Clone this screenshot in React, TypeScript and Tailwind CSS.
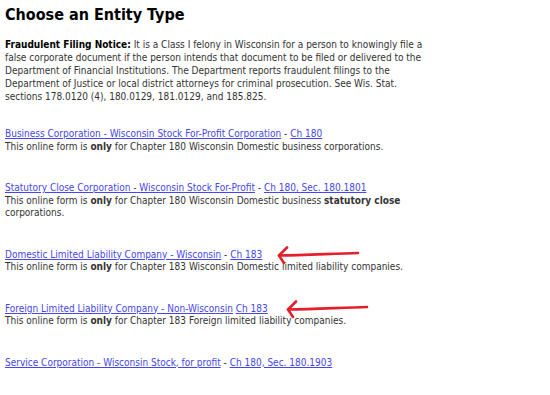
const entities = [
  {
    name: 'Business Corporation - Wisconsin Stock For-Profit Corporation',
    ch: 'Ch 180',
    dash: true,
    desc: (
      <>
        This online form is <b>only</b> for Chapter 180 Wisconsin Domestic business corporations.
      </>
    ),
  },
  {
    name: 'Statutory Close Corporation - Wisconsin Stock For-Profit',
    ch: 'Ch 180, Sec. 180.1801',
    dash: true,
    desc: (
      <>
        This online form is <b>only</b> for Chapter 180 Wisconsin Domestic business <b>statutory close</b>
        <br />
        corporations.
      </>
    ),
  },
  {
    name: 'Domestic Limited Liability Company - Wisconsin',
    ch: 'Ch 183',
    dash: true,
    arrow: 'left-[271px]',
    desc: (
      <>
        This online form is <b>only</b> for Chapter 183 Wisconsin Domestic limited liability companies.
      </>
    ),
  },
  {
    name: 'Foreign Limited Liability Company - Non-Wisconsin',
    ch: 'Ch 183',
    dash: false,
    arrow: 'left-[280px]',
    desc: (
      <>
        This online form is <b>only</b> for Chapter 183 Foreign limited liability companies.
      </>
    ),
  },
  {
    name: 'Service Corporation - Wisconsin Stock, for profit',
    ch: 'Ch 180, Sec. 180.1903',
    dash: true,
  },
];

// red hand-drawn arrow pointing left
function Arrow({ pos }: { pos: string }) {
  return (
    <svg width="90" height="22" viewBox="0 0 90 22" className={`absolute -top-[3px] ${pos}`}>
      <path
        d="M3 9.5 C 30 9, 60 7.5, 82 7"
        stroke="#e61e2b"
        strokeWidth="2.6"
        fill="none"
        strokeLinecap="round"
      />
      <path
        d="M11 1.5 L3 9.5 L8 17"
        stroke="#e61e2b"
        strokeWidth="2.6"
        fill="none"
        strokeLinecap="round"
        strokeLinejoin="round"
      />
    </svg>
  );
}

export default function App() {
  return (
    <div
      className="w-[550px] h-[395px] overflow-hidden bg-white px-[5px] text-[#333] text-[10px]"
      style={{ fontFamily: '"DejaVu Sans Condensed", "DejaVu Sans", Verdana, sans-serif', fontStretch: 'condensed' }}
    >
      <h1 className="pt-[4px] text-[16px] leading-[22px] font-bold text-black">Choose an Entity Type</h1>

      <p className="mt-[12px] w-[420px] leading-[13px]">
        <b className="text-black">Fraudulent Filing Notice:</b> It is a Class I felony in Wisconsin for a person to
        knowingly file a false corporate document if the person intends that document to be filed or delivered to the
        Department of Financial Institutions. The Department reports fraudulent filings to the Department of Justice or
        local district attorneys for criminal prosecution. See Wis. Stat. sections 178.0120 (4), 180.0129, 181.0129, and
        185.825.
      </p>

      <div className="mt-[25px] flex flex-col gap-[29px] leading-[12.5px]">
        {entities.map((e) => (
          <div key={e.name} className="relative">
            <div>
              <a href="#" className="text-[#4646f0] underline">
                {e.name}
              </a>
              {e.dash ? ' - ' : ' '}
              <a href="#" className="text-[#4646f0] underline">
                {e.ch}
              </a>
            </div>
            {e.desc && <div>{e.desc}</div>}
            {e.arrow && <Arrow pos={e.arrow} />}
          </div>
        ))}
      </div>
    </div>
  );
}
